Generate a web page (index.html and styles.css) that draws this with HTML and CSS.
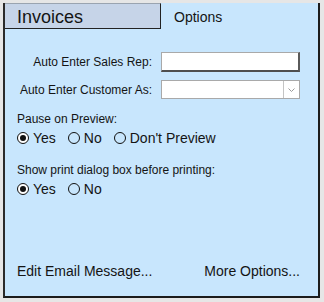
FILE: index.html
```html
<!DOCTYPE html>
<html lang="en">
<head>
    <meta charset="UTF-8">
    <meta name="viewport" content="width=device-width, initial-scale=1.0">
    <title>Invoice Options</title>
    <link rel="stylesheet" href="styles.css">
</head>
<body>
    <div class="panel">
        <div class="tabs">
            <div class="tab tabInactive">Invoices</div>
            <div class="tab tabActive">Options</div>
        </div>

        <div class="content">
            <div class="fields">
                <label class="fieldLabel">Auto Enter Sales Rep:</label>
                <div class="textBox"></div>

                <label class="fieldLabel">Auto Enter Customer As:</label>
                <div class="comboBox">
                    <div class="comboButton">
                        <svg width="7" height="4" viewBox="0 0 7 4"><path d="M0.5 0.5 L3.5 3.5 L6.5 0.5" fill="none" stroke="#9a9a9a" stroke-width="1"/></svg>
                    </div>
                </div>
            </div>

            <div class="groupTitle firstGroup">Pause on Preview:</div>
            <div class="radioRow">
                <span class="radio checked"></span><span class="radioText">Yes</span>
                <span class="radio"></span><span class="radioText">No</span>
                <span class="radio"></span><span class="radioText">Don't Preview</span>
            </div>

            <div class="groupTitle secondGroup">Show print dialog box before printing:</div>
            <div class="radioRow">
                <span class="radio checked"></span><span class="radioText">Yes</span>
                <span class="radio"></span><span class="radioText">No</span>
            </div>

            <div class="footer">
                <span class="link">Edit Email Message...</span>
                <span class="link">More Options...</span>
            </div>
        </div>
    </div>
</body>
</html>
```

FILE: styles.css
```css
html, body {
    margin: 0;
    padding: 0;
}

body {
    font-family: "Liberation Sans", Arial, sans-serif;
    background-color: #e6e6e6;
    color: #141414;
    width: 324px;
    height: 302px;
    padding: 3px 0 0 3px;
    box-sizing: border-box;
}

.panel {
    width: 317px;
    height: 295px;
    box-sizing: border-box;
    background-color: #c8e6fd;
    border-left: 2px solid #2a2a2a;
    border-right: 2px solid #1c1c1c;
    border-bottom: 2px solid #1c1c1c;
    display: flex;
    flex-direction: column;
}

.tabs {
    display: flex;
    height: 26px;
}

.tab {
    box-sizing: border-box;
    height: 26px;
}

.tabInactive {
    width: 156px;
    background-color: #c6d4e8;
    border-top: 1px solid #9aa4b0;
    border-right: 1px solid #222;
    border-bottom: 1px solid #222;
    font-size: 18px;
    line-height: 24px;
    padding-left: 12px;
    padding-top: 1px;
}

.tabActive {
    flex: 1;
    font-size: 14px;
    line-height: 16px;
    padding-left: 13px;
    padding-top: 6px;
}

.content {
    flex: 1;
    display: flex;
    flex-direction: column;
    padding: 23px 18px 17px 11px;
}

.fields {
    display: grid;
    grid-template-columns: 136px 139px;
    column-gap: 9px;
    row-gap: 8px;
    margin-left: -11px;
    padding-left: 11px;
    align-items: center;
}

.fieldLabel {
    font-size: 12px;
    text-align: right;
    white-space: nowrap;
}

.textBox {
    height: 20px;
    box-sizing: border-box;
    background-color: #fff;
    border: 1px solid #a9a9a9;
    border-right: 2px solid #5a5a5a;
    border-bottom: 2px solid #4e4e4e;
}

.comboBox {
    height: 19px;
    box-sizing: border-box;
    background-color: #fff;
    border: 1px solid #a9a9a9;
    display: flex;
    justify-content: flex-end;
}

.comboButton {
    width: 15px;
    border-left: 1px solid #c4c4c4;
    display: flex;
    align-items: center;
    justify-content: center;
}

.groupTitle {
    font-size: 12px;
    line-height: 14px;
    padding-left: 1px;
}

.firstGroup {
    margin-top: 13px;
}

.secondGroup {
    margin-top: 17px;
}

.radioRow {
    display: flex;
    align-items: center;
    height: 16px;
    margin-top: 4px;
    padding-left: 1px;
}

.radio {
    width: 12px;
    height: 12px;
    box-sizing: border-box;
    border: 1px solid #111;
    border-radius: 50%;
    position: relative;
}

.radio.checked {
    background-color: #fff;
}

.radio.checked::after {
    content: "";
    position: absolute;
    left: 2px;
    top: 2px;
    width: 6px;
    height: 6px;
    border-radius: 50%;
    background-color: #111;
}

.radioText {
    font-size: 14px;
    line-height: 16px;
    margin-left: 4px;
    margin-right: 12px;
}

.footer {
    margin-top: auto;
    display: flex;
    justify-content: space-between;
    padding-left: 1px;
}

.link {
    font-size: 14px;
    line-height: 16px;
}
```
